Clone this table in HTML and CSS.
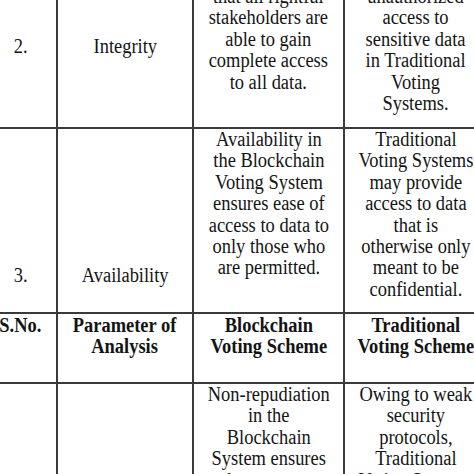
FILE: index.html
```html
<!DOCTYPE html>
<html>
<head>
<meta charset="utf-8">
<link rel="stylesheet" href="styles.css">
</head>
<body>
<div class="table">
  <div class="cell r1-side"><span class="t">2.</span></div>
  <div class="cell r1-side"><span class="t">Integrity</span></div>
  <div class="cell"><span class="t">that all rightful<br>stakeholders are<br>able to gain<br>complete access<br>to all data.</span></div>
  <div class="cell"><span class="t">unauthorized<br>access to<br>sensitive data<br>in Traditional<br>Voting<br>Systems.</span></div>

  <div class="cell r2-side"><span class="t">3.</span></div>
  <div class="cell r2-side"><span class="t">Availability</span></div>
  <div class="cell"><span class="t">Availability in<br>the Blockchain<br>Voting System<br>ensures ease of<br>access to data to<br>only those who<br>are permitted.</span></div>
  <div class="cell"><span class="t">Traditional<br>Voting Systems<br>may provide<br>access to data<br>that is<br>otherwise only<br>meant to be<br>confidential.</span></div>

  <div class="cell head"><span class="t">S.No.</span></div>
  <div class="cell head"><span class="t">Parameter of<br>Analysis</span></div>
  <div class="cell head"><span class="t">Blockchain<br>Voting Scheme</span></div>
  <div class="cell head"><span class="t">Traditional<br>Voting Scheme</span></div>

  <div class="cell"></div>
  <div class="cell"></div>
  <div class="cell"><span class="t">Non-repudiation<br>in the<br>Blockchain<br>System ensures<br>that no party</span></div>
  <div class="cell"><span class="t">Owing to weak<br>security<br>protocols,<br>Traditional<br>Voting Systems</span></div>
</div>
</body>
</html>
```
FILE: styles.css
```css
html, body {
  margin: 0;
  padding: 0;
  background: #ffffff;
  overflow: hidden;
}
.table {
  display: grid;
  grid-template-columns: 71px 134px 149px 141px;
  grid-template-rows: 141px 183px 68px 200px;
  gap: 2px;
  background: #3a3a3a;
  width: max-content;
  margin: -14px 0 0 -15px;
}
.cell {
  display: flex;
  justify-content: center;
  align-items: flex-start;
  background: #ffffff;
  color: #141414;
  font-family: "Liberation Serif", "Times New Roman", serif;
  font-size: 20.5px;
  line-height: 21.4px;
  text-align: center;
  white-space: nowrap;
}
.t {
  display: inline-block;
  flex: none;
  transform: scaleX(0.9);
  transform-origin: 50% 50%;
}
.r1-side {
  padding-top: 50px;
}
.r2-side {
  padding-top: 136px;
}
.head {
  font-weight: bold;
  padding-top: 1px;
}
```
